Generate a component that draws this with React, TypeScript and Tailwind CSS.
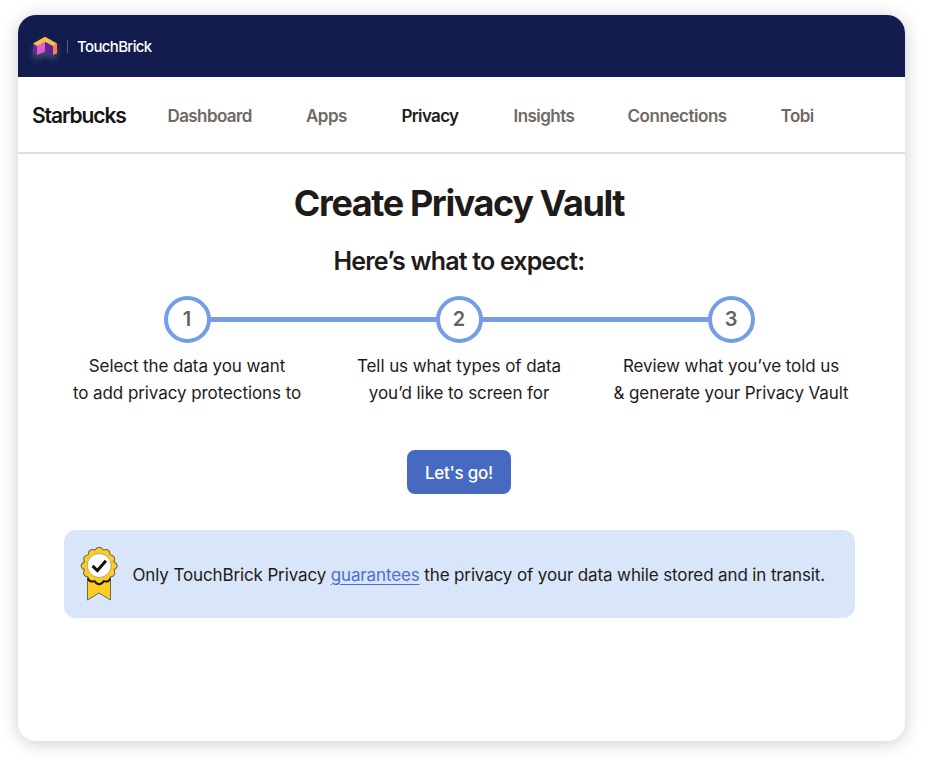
import React from 'react'

interface NavItem {
  label: string;
  className: string;
}

interface StepProps {
  number: number;
  lines: string[];
}

const navItems: NavItem[] = [
  { label: 'Dashboard', className: 'w-[138.5px] tracking-[-0.6px]' },
  { label: 'Apps', className: 'w-[95.5px] tracking-[-0.5px]' },
  { label: 'Privacy', className: 'w-28 tracking-[-0.65px]' },
  { label: 'Insights', className: 'w-[114px] tracking-[-0.55px]' },
  { label: 'Connections', className: 'w-[153px] tracking-[-0.45px]' },
  { label: 'Tobi', className: 'w-12 tracking-[-0.5px]' },
];

const steps: StepProps[] = [
  { number: 1, lines: ['Select the data you want', 'to add privacy protections to'] },
  { number: 2, lines: ['Tell us what types of data', 'you’d like to screen for'] },
  { number: 3, lines: ['Review what you’ve told us', '& generate your Privacy Vault'] },
];

const Logo = () => (
  <svg
    width="26"
    height="20"
    viewBox="0 0 26 20"
    className="drop-shadow-[0_4px_3px_rgba(255,255,255,0.2)]"
  >
    <path d="M1 7.5 5 9.5V19L1 17.5Z" fill="#5b2a9d" />
    <path d="M5 9.5 13 5V15.5L5 19Z" fill="#df60c4" />
    <path d="M13 5 21 9.5V19L13 15.5Z" fill="#5c239e" />
    <path d="M21 9.5 25 7.5V17.5L21 19Z" fill="#fb8050" />
    <path d="M1 7.5 13 .8 25 7.5 21 10 13 5.7 5 10Z" fill="#fdc043" />
  </svg>
);

const RibbonBadge = () => (
  <svg width="38" height="56" viewBox="0 0 38 56" strokeLinejoin="round">
    <path d="M7.5 31V54L19 47 30.5 54V31Z" fill="#fdcb24" stroke="#6d6750" />
    <path
      d="M19 1Q21.5 1 23.1 3.7 26.3 2.3 28.2 4.2 29.6 5.3 29.5 8.2 32.7 8.5 33.8 10.9 34.7 12.9 33 15.2 36.2 16.3 36.5 19 36.3 21.6 33.2 22.9 34.9 25.3 34 27.5 32.7 29.8 29.7 29.8 29.6 33 27.7 34 25.6 35.1 23.2 33.6 21.4 36.2 19 36.2 16.6 36.2 14.8 33.6 12.4 35.1 10.3 34 8.4 33 8.3 29.8 5.3 29.8 4 27.5 3.1 25.3 4.8 22.9 1.7 21.6 1.5 19 1.8 16.3 5 15.2 3.3 12.9 4.2 10.9 5.3 8.5 8.5 8.2 8.4 5.3 9.8 4.2 11.7 2.3 14.9 3.7 16.5 1 19 1Z"
      fill="#fdcb24"
      stroke="#6d6750"
      transform="translate(-.4 .2) scale(1.03)"
    />
    <path
      d="M8 32.6Q9 36.6 14.6 35.2 16.6 38.4 19.2 38.2 21.8 38.4 23.6 35.2 29.2 36.6 30 32.6"
      fill="none"
      stroke="#17150f"
      strokeWidth="1.9"
    />
    <circle cx="19.2" cy="19.5" r="12" fill="#fff" stroke="#a4975c" strokeWidth=".8" />
    <path d="M12.5 19.8 17.4 24.5 25.9 14.8" fill="none" stroke="#111" strokeWidth="3" strokeLinejoin="miter" />
  </svg>
);

const Step = ({ number, lines }: StepProps) => (
  <li className="flex w-[272px] flex-col items-center">
    <span className="flex size-[47px] items-center justify-center rounded-full border-4 border-[#769ee6] bg-white text-[20px] font-semibold text-[#69625c]">
      {number}
    </span>
    <p className="mt-2.5 text-center text-[17px] leading-[27px] tracking-[-0.08px] whitespace-nowrap">
      {lines.map((line) => (
        <span className="block" key={line}>
          {line}
        </span>
      ))}
    </p>
  </li>
);

const App = () => {
  return (
    <div className="h-[763px] overflow-hidden bg-white pt-[15px] pl-[18px] font-['Inter',sans-serif] text-[#1f1b19]">
      <div className="h-[726px] w-[887px] overflow-hidden rounded-[18px] bg-white shadow-[0_2px_18px_rgba(0,0,0,0.2)]">
        <header className="flex h-[62px] items-center bg-[#131c4e] pl-3.5">
          <Logo />
          <span className="ml-[9px] h-[13px] w-px bg-[#535a83]" />
          <span className="ml-[9px] pt-0.5 text-[15px] font-medium tracking-[-0.65px] text-white">TouchBrick</span>
        </header>

        <nav className="relative flex h-[77px] items-center border-b-2 border-[#e3dfdc] pt-1 pl-3.5 whitespace-nowrap">
          <span className="w-[135.5px] pb-0.5 text-[21px] font-semibold tracking-[-1.1px] text-[#151515]">Starbucks</span>
          {navItems.map(({ label, className }) => (
            <a
              className={`shrink-0 text-[17px] font-semibold ${label === 'Privacy' ? 'text-[#1f1b19]' : 'text-[#706963]'} ${className}`}
              key={label}
            >
              {label}
            </a>
          ))}
          <span className="absolute -bottom-0.5 left-[374px] h-0.5 w-[77px] bg-[#dcdcde]" />
        </nav>

        <main className="flex w-[882px] flex-col items-center pt-[25px]">
          <h1 className="text-[36px] leading-[48px] font-bold tracking-[-1.4px]">Create Privacy Vault</h1>
          <h2 className="mt-[18px] text-[25px] leading-8 font-semibold tracking-[-0.8px]">Here’s what to expect:</h2>

          <div className="relative mt-[18.5px]">
            <div className="absolute top-[21.5px] left-[136px] h-[5px] w-[544px] bg-[#769ee6]" />
            <ol className="relative flex">
              {steps.map((step) => (
                <Step key={step.number} {...step} />
              ))}
            </ol>
          </div>

          <button className="mt-[43.5px] h-11 w-[104px] rounded-lg bg-[#466ac2] pt-[3px] text-[17px] font-medium tracking-[-0.25px] text-white">
            Let's go!
          </button>

          <div className="mt-9 flex h-[88px] w-[791px] items-center rounded-xl bg-[#d9e5f8] pl-4">
            <RibbonBadge />
            <p className="ml-[15px] pt-[3px] text-[17px] tracking-[-0.13px] whitespace-nowrap">
              Only TouchBrick Privacy <a className="text-[#4f70ca] underline underline-offset-[3px]">guarantees</a> the
              privacy of your data while stored and in transit.
            </p>
          </div>
        </main>
      </div>
    </div>
  );
}

export default App
